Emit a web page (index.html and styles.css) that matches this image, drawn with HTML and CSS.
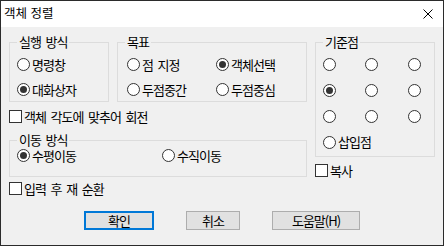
FILE: index.html
```html
<!DOCTYPE html>
<html lang="ko">
<head>
  <meta charset="UTF-8">
  <title>객체 정렬</title>
  <link rel="stylesheet" href="styles.css">
</head>
<body>
  <div class="window">
    <!-- Title bar -->
    <div class="titlebar">
      <span class="title">객체 정렬</span>
      <svg class="close" viewBox="0 0 10 10" width="10" height="10">
        <path d="M0.5 0.5 L9.5 9.5 M9.5 0.5 L0.5 9.5" stroke="#000" stroke-width="1" fill="none"/>
      </svg>
    </div>

    <div class="client">
      <div class="main">
        <div class="left">
          <div class="top-groups">
            <fieldset class="group group-mode">
              <legend>실행 방식</legend>
              <div class="opts-col">
                <div class="opt"><span class="radio"></span><span class="txt">명령창</span></div>
                <div class="opt"><span class="radio on"></span><span class="txt">대화상자</span></div>
              </div>
            </fieldset>

            <fieldset class="group group-target">
              <legend>목표</legend>
              <div class="target-grid">
                <div class="opt"><span class="radio"></span><span class="txt">점 지정</span></div>
                <div class="opt"><span class="radio on"></span><span class="txt">객체선택</span></div>
                <div class="opt"><span class="radio"></span><span class="txt">두점중간</span></div>
                <div class="opt"><span class="radio"></span><span class="txt">두점중심</span></div>
              </div>
            </fieldset>
          </div>

          <div class="check-row check-rotate"><span class="box"></span><span class="txt">객체 각도에 맞추어 회전</span></div>

          <fieldset class="group group-move">
            <legend>이동 방식</legend>
            <div class="move-grid">
              <div class="opt opt-short"><span class="radio on"></span><span class="txt">수평이동</span></div>
              <div class="opt opt-short"><span class="radio"></span><span class="txt">수직이동</span></div>
            </div>
          </fieldset>

          <div class="check-row check-cycle"><span class="box"></span><span class="txt">입력 후 재 순환</span></div>
        </div>

        <div class="right">
          <fieldset class="group group-base">
            <legend>기준점</legend>
            <div class="base-grid">
              <div class="opt"><span class="radio"></span></div>
              <div class="opt"><span class="radio"></span></div>
              <div class="opt"><span class="radio"></span></div>
              <div class="opt"><span class="radio on"></span></div>
              <div class="opt"><span class="radio"></span></div>
              <div class="opt"><span class="radio"></span></div>
              <div class="opt"><span class="radio"></span></div>
              <div class="opt"><span class="radio"></span></div>
              <div class="opt"><span class="radio"></span></div>
              <div class="opt opt-wide"><span class="radio"></span><span class="txt">삽입점</span></div>
            </div>
          </fieldset>

          <div class="check-row check-copy"><span class="box"></span><span class="txt">복사</span></div>
        </div>
      </div>

      <div class="buttons">
        <button class="btn btn-default btn-ok">확인</button>
        <button class="btn btn-cancel">취소</button>
        <button class="btn btn-help">도움말(H)</button>
      </div>
    </div>
  </div>
</body>
</html>
```

FILE: styles.css
```css
/* Base */
html, body {
  margin: 0;
  padding: 0;
}

body {
  font-family: "Noto Sans CJK KR", "Noto Sans", sans-serif;
  font-size: 13px;
  color: #000;
  background: #fff;
}

/* Window frame */
.window {
  width: 444px;
  height: 246px;
  box-sizing: border-box;
  border: 1px solid #2b2b2b;
  background: #f0f0f0;
  display: flex;
  flex-direction: column;
}

.titlebar {
  height: 26px;
  box-sizing: border-box;
  padding: 0 10px 2px 3px;
  background: #fff;
  display: flex;
  align-items: center;
  justify-content: space-between;
}

.title {
  font-size: 12.5px;
  line-height: 14px;
}

.close {
  display: block;
  margin-top: 1px;
}

/* Client area */
.client {
  flex: 1;
  padding: 8px 8px 0;
  display: flex;
  flex-direction: column;
}

.main {
  display: flex;
  gap: 8px;
}

.left {
  width: 298px;
  display: flex;
  flex-direction: column;
}

.right {
  width: 120px;
  display: flex;
  flex-direction: column;
}

.top-groups {
  display: flex;
  gap: 8px;
}

/* Group boxes */
.group {
  margin: 0;
  padding: 0 7px;
  min-width: 0;
  box-sizing: border-box;
  border: 1px solid #dcdcdc;
}

.group legend {
  padding: 0 2px;
  line-height: 14px;
  letter-spacing: -1px;
  word-spacing: 2px;
}

.group-mode {
  width: 100px;
  height: 67px;
}

.group-target {
  width: 190px;
  height: 67px;
}

.group-move {
  height: 44px;
  margin-top: 10px;
}

.group-base {
  height: 122px;
}

/* Options */
.txt {
  line-height: 14px;
  letter-spacing: -1px;
  word-spacing: 2px;
  white-space: nowrap;
}

.opt {
  height: 25px;
  display: flex;
  align-items: center;
  gap: 2px;
}

.opt-short {
  height: 13px;
}

.opts-col {
  padding-top: 3px;
  display: flex;
  flex-direction: column;
}

.target-grid {
  display: grid;
  grid-template-columns: 89px auto;
  padding-top: 3px;
  margin-left: 2px;
}

.move-grid {
  display: grid;
  grid-template-columns: 145px auto;
  padding-top: 2px;
}

.base-grid {
  display: grid;
  grid-template-columns: 42px 43px auto;
  grid-auto-rows: 26px;
  padding-top: 2px;
}

.base-grid .opt {
  height: 26px;
}

.opt-wide {
  grid-column: 1 / -1;
}

.radio {
  flex: none;
  width: 13px;
  height: 13px;
  box-sizing: border-box;
  border: 1px solid #333;
  border-radius: 50%;
  background: #fff;
  display: flex;
  align-items: center;
  justify-content: center;
}

.radio.on::after {
  content: "";
  width: 7px;
  height: 7px;
  border-radius: 50%;
  background: #333;
}

/* Checkboxes */
.check-row {
  height: 13px;
  display: flex;
  align-items: center;
  gap: 2px;
}

.box {
  flex: none;
  width: 13px;
  height: 13px;
  box-sizing: border-box;
  border: 1px solid #333;
  background: #fff;
}

.check-rotate {
  margin-top: 8px;
}

.check-cycle {
  margin-top: 5px;
}

.check-copy {
  margin-top: 7px;
}

/* Buttons */
.buttons {
  margin-top: 16px;
  display: flex;
  justify-content: center;
  gap: 32px;
}

.btn {
  height: 19px;
  padding: 0;
  box-sizing: border-box;
  border: 1px solid #adadad;
  background: #e1e1e1;
  font-family: inherit;
  font-size: 13px;
  line-height: 14px;
  letter-spacing: -1px;
  color: #000;
}

.btn-default {
  border: 2px solid #0078d7;
}

.btn-ok {
  width: 70px;
}

.btn-cancel {
  width: 54px;
}

.btn-help {
  width: 88px;
}
```
